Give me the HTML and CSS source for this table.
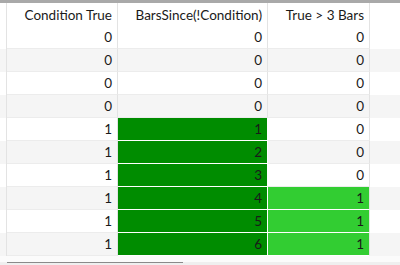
FILE: index.html
```html
<!DOCTYPE html>
<html>
<head>
<meta charset="utf-8">
<link rel="stylesheet" href="styles.css">
</head>
<body>
<div class="topbar"></div>
<div class="grid">
  <div class="row head">
    <div class="rh"></div>
    <div class="c">Condition True</div>
    <div class="c">BarsSince(!Condition)</div>
    <div class="c">True &gt; 3 Bars</div>
    <div class="rest"></div>
  </div>
  <div class="row"><div class="rh"></div><div class="c">0</div><div class="c">0</div><div class="c">0</div><div class="rest"></div></div>
  <div class="row alt"><div class="rh"></div><div class="c">0</div><div class="c">0</div><div class="c">0</div><div class="rest"></div></div>
  <div class="row"><div class="rh"></div><div class="c">0</div><div class="c">0</div><div class="c">0</div><div class="rest"></div></div>
  <div class="row alt"><div class="rh"></div><div class="c">0</div><div class="c">0</div><div class="c">0</div><div class="rest"></div></div>
  <div class="row"><div class="rh"></div><div class="c">1</div><div class="c dg">1</div><div class="c">0</div><div class="rest"></div></div>
  <div class="row alt"><div class="rh"></div><div class="c">1</div><div class="c dg">2</div><div class="c">0</div><div class="rest"></div></div>
  <div class="row"><div class="rh"></div><div class="c">1</div><div class="c dg">3</div><div class="c">0</div><div class="rest"></div></div>
  <div class="row alt"><div class="rh"></div><div class="c">1</div><div class="c dg">4</div><div class="c lg">1</div><div class="rest"></div></div>
  <div class="row"><div class="rh"></div><div class="c">1</div><div class="c dg">5</div><div class="c lg">1</div><div class="rest"></div></div>
  <div class="row alt"><div class="rh"></div><div class="c">1</div><div class="c dg">6</div><div class="c lg">1</div><div class="rest"></div></div>
</div>
<div class="gap"></div>
<div class="bottom">
  <div class="scroll"></div>
</div>
</body>
</html>
```
FILE: styles.css
```css
html, body {
  margin: 0;
  padding: 0;
  background: #ffffff;
  width: 400px;
  height: 265px;
  overflow: hidden;
  font-family: Lato, "Noto Sans", sans-serif;
  font-size: 13.5px;
  color: #1a1a1a;
}
.topbar {
  height: 3px;
  background: #a9a9a9;
}
.grid {
  display: flex;
  flex-direction: column;
}
.row {
  display: grid;
  grid-template-columns: 7px 111px 150px 102px 1fr;
  height: 23px;
}
.row.alt {
  background: #f5f5f5;
}
.rh {
  border-right: 1px solid #e3e3e3;
}
.c {
  display: flex;
  align-items: center;
  justify-content: flex-end;
  padding-right: 5px;
  border-right: 1px solid #e3e3e3;
  border-bottom: 1px solid #ececec;
  box-sizing: border-box;
}
.head .c {
  border-bottom: none;
}
.c.dg {
  background: #008c00;
  border-bottom: 1px solid #ffffff;
  border-right: 1px solid #ffffff;
}
.c.lg {
  background: #32cd32;
  border-bottom: 1px solid #ffffff;
}
.gap {
  height: 6px;
  background: #fbfbfb;
}
.bottom {
  height: 3px;
  background: #efefef;
}
.scroll {
  margin-left: 7px;
  width: 176px;
  height: 1px;
  background: #8a8a8a;
}
```
